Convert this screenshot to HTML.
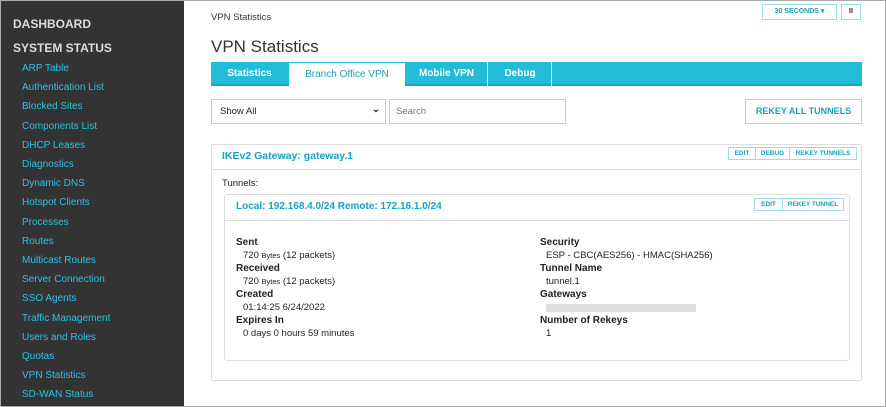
<!DOCTYPE html>
<html><head><style>
*{box-sizing:border-box;margin:0;padding:0}
body{width:886px;height:407px;overflow:hidden;font-family:"Liberation Sans",sans-serif;background:#fff;position:relative}
.frame{position:absolute;left:0;top:0;width:886px;height:407px;border:1px solid #aaa;z-index:5;pointer-events:none}
.sb{position:absolute;left:0;top:0;width:184px;height:407px;background:#333}
.sb .h{position:absolute;left:13px;color:#ddd;font-weight:bold;font-size:12px}
.sb a{position:absolute;left:22px;color:#2cc3e6;font-size:10px;text-decoration:none}
.a{position:absolute;white-space:nowrap}
.btn{position:absolute;border:1px solid #9fdcea;color:#1a9fc0;font-weight:bold;font-size:7px;text-align:center;background:#fff}
.l{font-size:9.5px;color:#222}
.b{font-size:10px;font-weight:bold;color:#222}
</style></head><body>
<div class="frame"></div>
<div class="sb">
<div class="h" style="top:17px">DASHBOARD</div>
<div class="h" style="top:41px">SYSTEM STATUS</div>
<a style="top:63px">ARP Table</a>
<a style="top:82px">Authentication List</a>
<a style="top:101px">Blocked Sites</a>
<a style="top:121px">Components List</a>
<a style="top:140px">DHCP Leases</a>
<a style="top:159px">Diagnostics</a>
<a style="top:178px">Dynamic DNS</a>
<a style="top:197px">Hotspot Clients</a>
<a style="top:217px">Processes</a>
<a style="top:236px">Routes</a>
<a style="top:255px">Multicast Routes</a>
<a style="top:274px">Server Connection</a>
<a style="top:293px">SSO Agents</a>
<a style="top:313px">Traffic Management</a>
<a style="top:332px">Users and Roles</a>
<a style="top:351px">Quotas</a>
<a style="top:370px">VPN Statistics</a>
<a style="top:389px">SD-WAN Status</a>
</div>
<div class="a" style="left:211px;top:12px;font-size:9.5px;color:#333">VPN Statistics</div>
<div class="btn" style="left:762px;top:4px;width:75px;height:16px;line-height:14px">30 SECONDS ▾</div>
<div class="btn" style="left:841px;top:4px;width:20px;height:16px;line-height:14px;color:#222">II</div>
<div class="a" style="left:211px;top:37px;font-size:17px;color:#333">VPN Statistics</div>
<div class="a" style="left:211px;top:62px;width:651px;height:24px;background:#22bcd8;border-bottom:2px solid #1aa6c2"></div>
<div class="a" style="left:211px;top:62px;width:77px;height:24px;line-height:24px;text-align:center;color:#fff;font-weight:bold;font-size:10px">Statistics</div>
<div class="a" style="left:289px;top:62px;width:116px;height:26px;line-height:24px;text-align:center;color:#1a9fc0;font-size:10px;background:#fff;border-top:1px solid #22bcd8">Branch Office VPN</div>
<div class="a" style="left:406px;top:62px;width:82px;height:24px;line-height:24px;text-align:center;color:#fff;font-weight:bold;font-size:10px;border-right:1px solid #fff">Mobile VPN</div>
<div class="a" style="left:489px;top:62px;width:63px;height:24px;line-height:24px;text-align:center;color:#fff;font-weight:bold;font-size:10px;border-right:1px solid #fff">Debug</div>
<div class="a" style="left:211px;top:99px;width:175px;height:25px;border:1px solid #9fdcea;font-size:9.5px;color:#222;padding:6px 8px">Show All<span style="position:absolute;right:5px;top:4px;font-weight:bold">⌄</span></div>
<div class="a" style="left:389px;top:99px;width:177px;height:25px;border:1px solid #9fdcea;font-size:9.5px;color:#777;padding:6px 6px">Search</div>
<div class="btn" style="left:745px;top:99px;width:117px;height:25px;line-height:23px;font-size:9px">REKEY ALL TUNNELS</div>
<div class="a" style="left:211px;top:144px;width:651px;height:237px;border:1px solid #ddd;border-radius:2px"></div>
<div class="a" style="left:211px;top:169px;width:651px;height:1px;background:#ddd"></div>
<div class="a" style="left:222px;top:150px;font-size:10.5px;font-weight:bold;color:#1a9fc0">IKEv2 Gateway: gateway.1</div>
<div class="btn" style="left:728px;top:147px;width:28px;height:13px;line-height:11px;font-size:6.5px">EDIT</div>
<div class="btn" style="left:755px;top:147px;width:35px;height:13px;line-height:11px;font-size:6.5px">DEBUG</div>
<div class="btn" style="left:789px;top:147px;width:68px;height:13px;line-height:11px;font-size:6.5px">REKEY TUNNELS</div>
<div class="a l" style="left:222px;top:178px">Tunnels:</div>
<div class="a" style="left:224px;top:194px;width:626px;height:167px;border:1px solid #ddd;border-radius:3px"></div>
<div class="a" style="left:224px;top:220px;width:626px;height:1px;background:#ddd"></div>
<div class="a" style="left:236px;top:201px;font-size:10px;font-weight:bold;color:#1a9fc0">Local: 192.168.4.0/24 Remote: 172.16.1.0/24</div>
<div class="btn" style="left:754px;top:198px;width:29px;height:13px;line-height:11px;font-size:6.5px">EDIT</div>
<div class="btn" style="left:782px;top:198px;width:62px;height:13px;line-height:11px;font-size:6.5px">REKEY TUNNEL</div>
<div class="a b" style="left:236px;top:237px">Sent</div>
<div class="a l" style="left:243px;top:250px">720 <span style="font-size:7.5px">Bytes</span> (12 packets)</div>
<div class="a b" style="left:236px;top:263px">Received</div>
<div class="a l" style="left:243px;top:276px">720 <span style="font-size:7.5px">Bytes</span> (12 packets)</div>
<div class="a b" style="left:236px;top:289px">Created</div>
<div class="a l" style="left:243px;top:302px">01:14:25 6/24/2022</div>
<div class="a b" style="left:236px;top:315px">Expires In</div>
<div class="a l" style="left:243px;top:328px">0 days 0 hours 59 minutes</div>
<div class="a b" style="left:540px;top:237px">Security</div>
<div class="a l" style="left:546px;top:250px">ESP - CBC(AES256) - HMAC(SHA256)</div>
<div class="a b" style="left:540px;top:263px">Tunnel Name</div>
<div class="a l" style="left:546px;top:276px">tunnel.1</div>
<div class="a b" style="left:540px;top:289px">Gateways</div>
<div class="a" style="left:546px;top:304px;width:150px;height:8px;background:#ddd"></div>
<div class="a b" style="left:540px;top:315px">Number of Rekeys</div>
<div class="a l" style="left:546px;top:328px">1</div>
</body></html>
